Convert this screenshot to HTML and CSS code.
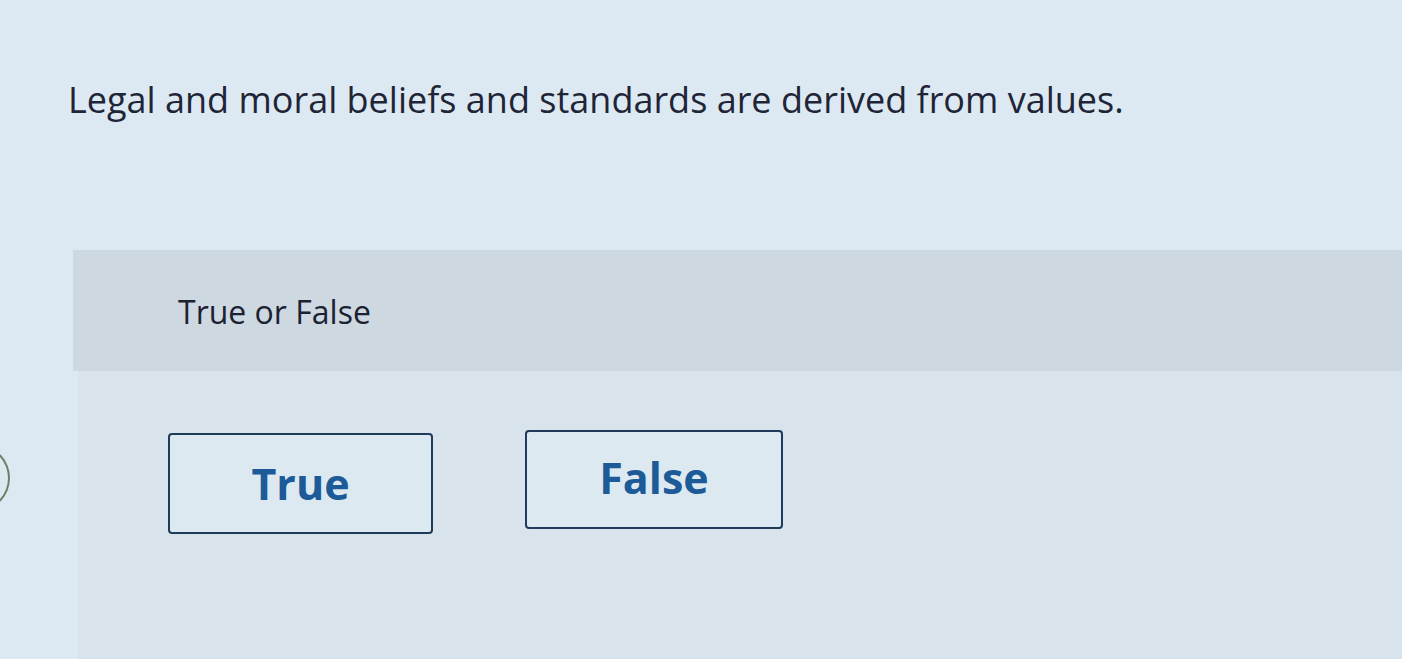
FILE: index.html
```html
<!DOCTYPE html>
<html lang="en">
<head>
<meta charset="utf-8">
<title>True or False</title>
<link rel="stylesheet" href="styles.css">
</head>
<body>
<div class="page">
  <span class="edge-radio"></span>
  <h1 class="prompt">Legal and moral beliefs and standards are derived from values.</h1>
  <section class="question">
    <div class="question-head">True or False</div>
    <div class="question-body">
      <button class="choice choice-true">True</button>
      <button class="choice choice-false">False</button>
    </div>
  </section>
</div>
</body>
</html>
```
FILE: styles.css
```css
* { box-sizing: border-box; }

html, body {
  margin: 0;
  height: 100%;
}

body {
  background: #dce9f3;
  font-family: "Open Sans", Lato, sans-serif;
  color: #1d2233;
  overflow: hidden;
}

.page {
  position: relative;
  height: 659px;
  display: flex;
  flex-direction: column;
}

.prompt {
  margin: 0;
  padding: 76px 0 0 68px;
  font-size: 36px;
  font-weight: 400;
  line-height: 48px;
  color: #1f2536;
}

.question {
  margin: 126px 0 0 73px;
  flex: 1;
  display: flex;
  flex-direction: column;
}

.question-head {
  height: 121px;
  background: #ced8e0;
  padding: 40px 0 0 105px;
  font-size: 32px;
  line-height: 44px;
  color: #1d2233;
}

.question-body {
  flex: 1;
  margin-left: 5px;
  background: #d8e3eb;
  display: flex;
  align-items: flex-start;
  gap: 92px;
  padding: 62px 0 0 90px;
}

.choice {
  font-family: "Open Sans", Lato, sans-serif;
  font-weight: 700;
  font-size: 43px;
  color: #1c5a98;
  background: #dde9f1;
  border: 2px solid #1e3b5c;
  border-radius: 4px;
  height: 101px;
  display: flex;
  align-items: center;
  justify-content: center;
  padding: 0;
}

.choice-true { width: 265px; }

.choice-false {
  width: 258px;
  height: 99px;
  margin-top: -3px;
  padding-bottom: 4px;
}

/* partly visible radio at the left edge */
.edge-radio {
  position: absolute;
  left: -50px;
  top: 446px;
  width: 60px;
  height: 64px;
  border: 2px solid #6e7f6a;
  border-radius: 50%;
  background: #dde9f1;
}
```
